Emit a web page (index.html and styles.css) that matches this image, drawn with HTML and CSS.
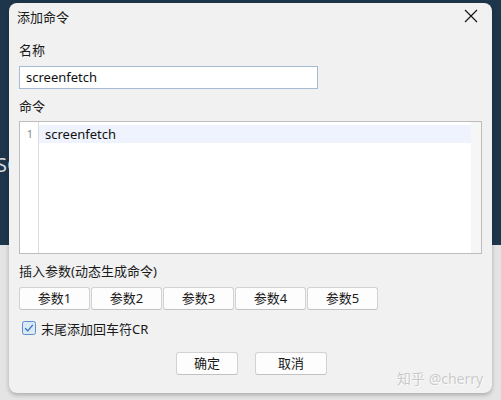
FILE: index.html
```html
<!DOCTYPE html>
<html lang="zh">
<head>
<meta charset="utf-8">
<link rel="stylesheet" href="styles.css">
</head>
<body>
<div class="desk">
  <div class="desk-top"><span class="desk-text">SC</span></div>
  <div class="dialog">
    <div class="titlebar">
      <span class="title">添加命令</span>
      <svg class="close" width="14" height="14" viewBox="0 0 14 14"><path d="M1 1L13 13M13 1L1 13" stroke="#111" stroke-width="1.1" fill="none"/></svg>
    </div>
    <div class="content">
      <div class="label first">名称</div>
      <div class="input">screenfetch</div>
      <div class="label">命令</div>
      <div class="editor">
        <div class="gutter"><span class="ln">1</span></div>
        <div class="code">
          <div class="line active">screenfetch</div>
        </div>
        <div class="vscroll"></div>
      </div>
      <div class="label">插入参数(动态生成命令)</div>
      <div class="params">
        <button class="btn param">参数1</button>
        <button class="btn param">参数2</button>
        <button class="btn param">参数3</button>
        <button class="btn param">参数4</button>
        <button class="btn param">参数5</button>
      </div>
      <label class="check">
        <svg class="box" width="14" height="14" viewBox="0 0 14 14"><rect x="0.5" y="0.5" width="13" height="13" rx="2" fill="#dbe9f7" stroke="#5b8fcf"/><path d="M3.2 7.2L5.8 9.9L10.8 3.9" stroke="#2f6fbd" stroke-width="1.3" fill="none"/></svg>
        <span>末尾添加回车符CR</span>
      </label>
      <div class="actions">
        <button class="btn ok">确定</button>
        <button class="btn cancel">取消</button>
      </div>
    </div>
    <div class="watermark">知乎 @cherry</div>
  </div>
</div>
</body>
</html>
```
FILE: styles.css
```css
html, body {
  margin: 0;
  padding: 0;
}
body {
  width: 501px;
  height: 400px;
  overflow: hidden;
  font-family: "Noto Sans", "Noto Sans CJK SC", sans-serif;
  background: linear-gradient(to bottom, #1e364b 0, #1e364b 245px, #e4e4e4 245px, #e4e4e4 100%);
}
.desk {
  position: relative;
  width: 501px;
  height: 400px;
  padding-top: 3px;
  box-sizing: border-box;
}
.desk-top {
  position: absolute;
  left: 0;
  top: 150px;
  width: 9px;
  height: 30px;
  overflow: hidden;
}
.desk-text {
  display: block;
  margin-left: -4px;
  color: #d8dde2;
  font-size: 20px;
  line-height: 30px;
}
.dialog {
  position: relative;
  margin-left: 9px;
  width: 483px;
  height: 390px;
  background: #f1f1f1;
  border-radius: 8px;
  box-shadow: 0 2px 4px rgba(0,0,0,0.25);
  box-sizing: border-box;
}
.titlebar {
  height: 27px;
  display: flex;
  align-items: center;
  justify-content: space-between;
  padding: 0 14px 0 8px;
}
.title {
  font-size: 13px;
  color: #1a1a1a;
}
.close {
  display: block;
  margin-top: -1px;
}
.content {
  padding: 0 10px;
}
.label {
  font-size: 13px;
  line-height: 18px;
  color: #1a1a1a;
  margin-top: 8px;
}
.label.first {
  margin-top: 11px;
}
.input {
  margin-top: 7px;
  width: 299px;
  height: 23px;
  box-sizing: border-box;
  border: 1px solid #a6bad3;
  background: #fff;
  font-size: 13px;
  line-height: 21px;
  padding-left: 6px;
  color: #111;
}
.editor {
  margin-top: 6px;
  width: 463px;
  height: 133px;
  box-sizing: border-box;
  border: 1px solid #bdbdbd;
  background: #fff;
  display: flex;
}
.gutter {
  width: 19px;
  border-right: 1px solid #dcdcdc;
  box-sizing: border-box;
  text-align: right;
  padding: 3px 5px 0 0;
}
.ln {
  font-size: 11px;
  line-height: 18px;
  color: #8a8a8a;
  display: block;
}
.code {
  flex: 1;
  padding-top: 3px;
}
.line {
  font-size: 13px;
  line-height: 18px;
  padding-left: 6px;
  color: #111;
}
.line.active {
  background: #eef3fd;
}
.vscroll {
  width: 10px;
  background: #f6f6f6;
}
.params {
  margin-top: 7px;
  display: flex;
  gap: 1px;
}
.btn {
  font-family: "Noto Sans", "Noto Sans CJK SC", sans-serif;
  font-size: 13px;
  color: #1a1a1a;
  background: #fdfdfd;
  border: 1px solid #d2d2d2;
  border-bottom-color: #c2c2c2;
  border-radius: 3px;
  height: 23px;
  padding: 0;
  line-height: 21px;
  box-sizing: border-box;
}
.param {
  width: 71px;
}
.check {
  margin-top: 9px;
  display: flex;
  align-items: center;
  height: 18px;
  font-size: 13px;
  color: #1a1a1a;
  padding-left: 3px;
}
.box {
  display: block;
  margin-right: 5px;
}
.actions {
  margin-top: 15px;
  display: flex;
  gap: 17px;
  padding-left: 157px;
}
.ok {
  width: 62px;
}
.cancel {
  width: 72px;
}
.watermark {
  position: absolute;
  left: 388px;
  top: 365px;
  font-size: 14px;
  color: #c9c9c9;
  text-shadow: 0 0 1px #fff, 1px 1px 0 #fafafa;
}
```
